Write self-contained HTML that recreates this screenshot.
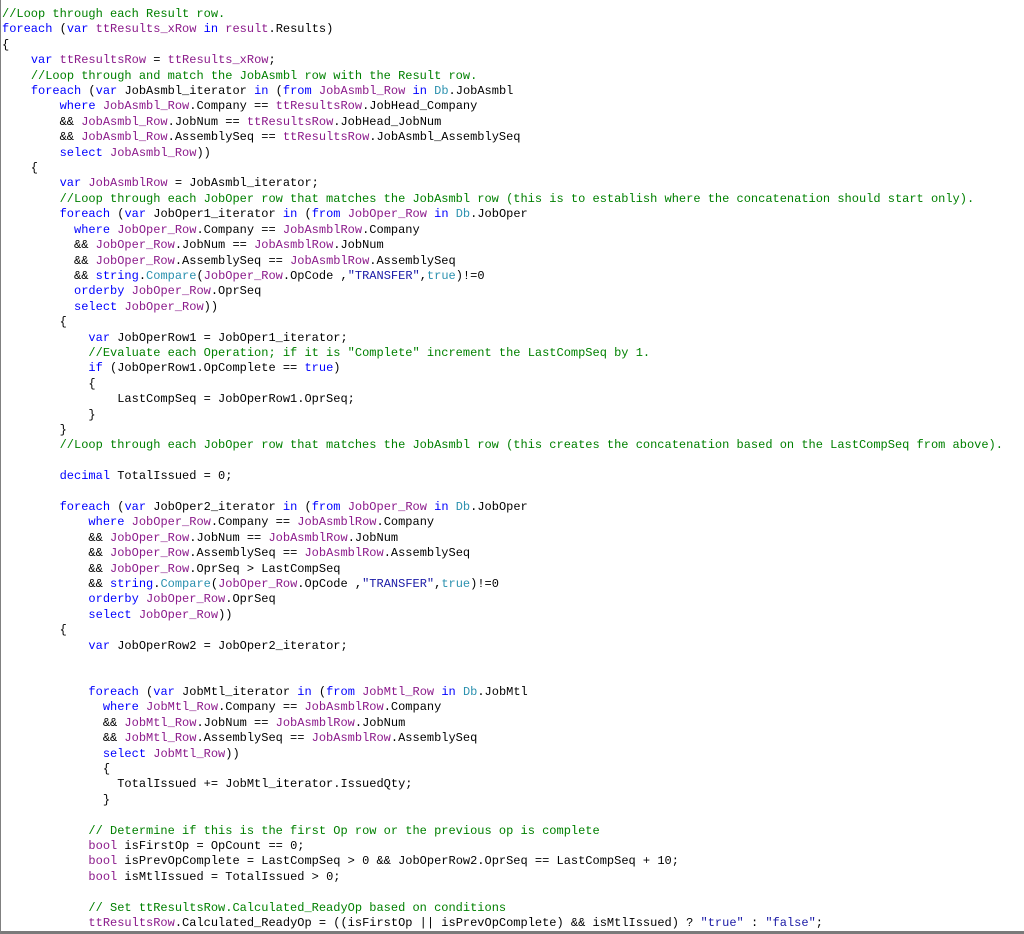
<!DOCTYPE html>
<html><head><meta charset="utf-8"><style>
html,body{margin:0;padding:0;background:#fff;}
body{width:1024px;height:934px;overflow:hidden;position:relative;}
.frame{position:absolute;left:0;top:0;width:1024px;height:931px;border-left:1px solid #808080;border-bottom:3px solid #7a7a7a;box-sizing:content-box;}
pre{margin:0;position:absolute;left:2px;top:7px;font-family:"Liberation Mono",monospace;font-size:12px;line-height:15.41px;color:#000;white-space:pre;}
.k{color:#0000ff}.c{color:#008000}.p{color:#8b1a8b}.t{color:#2b91af}.s{color:#1a1aa6}
</style></head><body><div class="frame"></div>
<pre><span class="c">//Loop through each Result row.</span>
<span class="k">foreach</span> (<span class="k">var</span> <span class="p">ttResults_xRow</span> <span class="k">in</span> <span class="p">result</span>.Results)
{
    <span class="k">var</span> <span class="p">ttResultsRow</span> = <span class="p">ttResults_xRow</span>;
    <span class="c">//Loop through and match the JobAsmbl row with the Result row.</span>
    <span class="k">foreach</span> (<span class="k">var</span> JobAsmbl_iterator <span class="k">in</span> (<span class="k">from</span> <span class="p">JobAsmbl_Row</span> <span class="k">in</span> <span class="t">Db</span>.JobAsmbl
        <span class="k">where</span> <span class="p">JobAsmbl_Row</span>.Company == <span class="p">ttResultsRow</span>.JobHead_Company
        &amp;&amp; <span class="p">JobAsmbl_Row</span>.JobNum == <span class="p">ttResultsRow</span>.JobHead_JobNum
        &amp;&amp; <span class="p">JobAsmbl_Row</span>.AssemblySeq == <span class="p">ttResultsRow</span>.JobAsmbl_AssemblySeq
        <span class="k">select</span> <span class="p">JobAsmbl_Row</span>))
    {
        <span class="k">var</span> <span class="p">JobAsmblRow</span> = JobAsmbl_iterator;
        <span class="c">//Loop through each JobOper row that matches the JobAsmbl row (this is to establish where the concatenation should start only).</span>
        <span class="k">foreach</span> (<span class="k">var</span> JobOper1_iterator <span class="k">in</span> (<span class="k">from</span> <span class="p">JobOper_Row</span> <span class="k">in</span> <span class="t">Db</span>.JobOper
          <span class="k">where</span> <span class="p">JobOper_Row</span>.Company == <span class="p">JobAsmblRow</span>.Company
          &amp;&amp; <span class="p">JobOper_Row</span>.JobNum == <span class="p">JobAsmblRow</span>.JobNum
          &amp;&amp; <span class="p">JobOper_Row</span>.AssemblySeq == <span class="p">JobAsmblRow</span>.AssemblySeq
          &amp;&amp; <span class="k">string</span>.<span class="t">Compare</span>(<span class="p">JobOper_Row</span>.OpCode ,<span class="s">"TRANSFER"</span>,<span class="t">true</span>)!=0
          <span class="k">orderby</span> <span class="p">JobOper_Row</span>.OprSeq
          <span class="k">select</span> <span class="p">JobOper_Row</span>))
        {
            <span class="k">var</span> JobOperRow1 = JobOper1_iterator;
            <span class="c">//Evaluate each Operation; if it is "Complete" increment the LastCompSeq by 1.</span>
            <span class="k">if</span> (JobOperRow1.OpComplete == <span class="k">true</span>)
            {
                LastCompSeq = JobOperRow1.OprSeq;
            }
        }
        <span class="c">//Loop through each JobOper row that matches the JobAsmbl row (this creates the concatenation based on the LastCompSeq from above).</span>

        <span class="k">decimal</span> TotalIssued = 0;

        <span class="k">foreach</span> (<span class="k">var</span> JobOper2_iterator <span class="k">in</span> (<span class="k">from</span> <span class="p">JobOper_Row</span> <span class="k">in</span> <span class="t">Db</span>.JobOper
            <span class="k">where</span> <span class="p">JobOper_Row</span>.Company == <span class="p">JobAsmblRow</span>.Company
            &amp;&amp; <span class="p">JobOper_Row</span>.JobNum == <span class="p">JobAsmblRow</span>.JobNum
            &amp;&amp; <span class="p">JobOper_Row</span>.AssemblySeq == <span class="p">JobAsmblRow</span>.AssemblySeq
            &amp;&amp; <span class="p">JobOper_Row</span>.OprSeq &gt; LastCompSeq
            &amp;&amp; <span class="k">string</span>.<span class="t">Compare</span>(<span class="p">JobOper_Row</span>.OpCode ,<span class="s">"TRANSFER"</span>,<span class="t">true</span>)!=0
            <span class="k">orderby</span> <span class="p">JobOper_Row</span>.OprSeq
            <span class="k">select</span> <span class="p">JobOper_Row</span>))
        {
            <span class="k">var</span> JobOperRow2 = JobOper2_iterator;


            <span class="k">foreach</span> (<span class="k">var</span> JobMtl_iterator <span class="k">in</span> (<span class="k">from</span> <span class="p">JobMtl_Row</span> <span class="k">in</span> <span class="t">Db</span>.JobMtl
              <span class="k">where</span> <span class="p">JobMtl_Row</span>.Company == <span class="p">JobAsmblRow</span>.Company
              &amp;&amp; <span class="p">JobMtl_Row</span>.JobNum == <span class="p">JobAsmblRow</span>.JobNum
              &amp;&amp; <span class="p">JobMtl_Row</span>.AssemblySeq == <span class="p">JobAsmblRow</span>.AssemblySeq
              <span class="k">select</span> <span class="p">JobMtl_Row</span>))
              {
                TotalIssued += JobMtl_iterator.IssuedQty;
              }

            <span class="c">// Determine if this is the first Op row or the previous op is complete</span>
            <span class="p">bool</span> isFirstOp = OpCount == 0;
            <span class="p">bool</span> isPrevOpComplete = LastCompSeq &gt; 0 &amp;&amp; JobOperRow2.OprSeq == LastCompSeq + 10;
            <span class="p">bool</span> isMtlIssued = TotalIssued &gt; 0;

            <span class="c">// Set ttResultsRow.Calculated_ReadyOp based on conditions</span>
            <span class="p">ttResultsRow</span>.Calculated_ReadyOp = ((isFirstOp || isPrevOpComplete) &amp;&amp; isMtlIssued) ? <span class="s">"true"</span> : <span class="s">"false"</span>;</pre>
</body></html>
